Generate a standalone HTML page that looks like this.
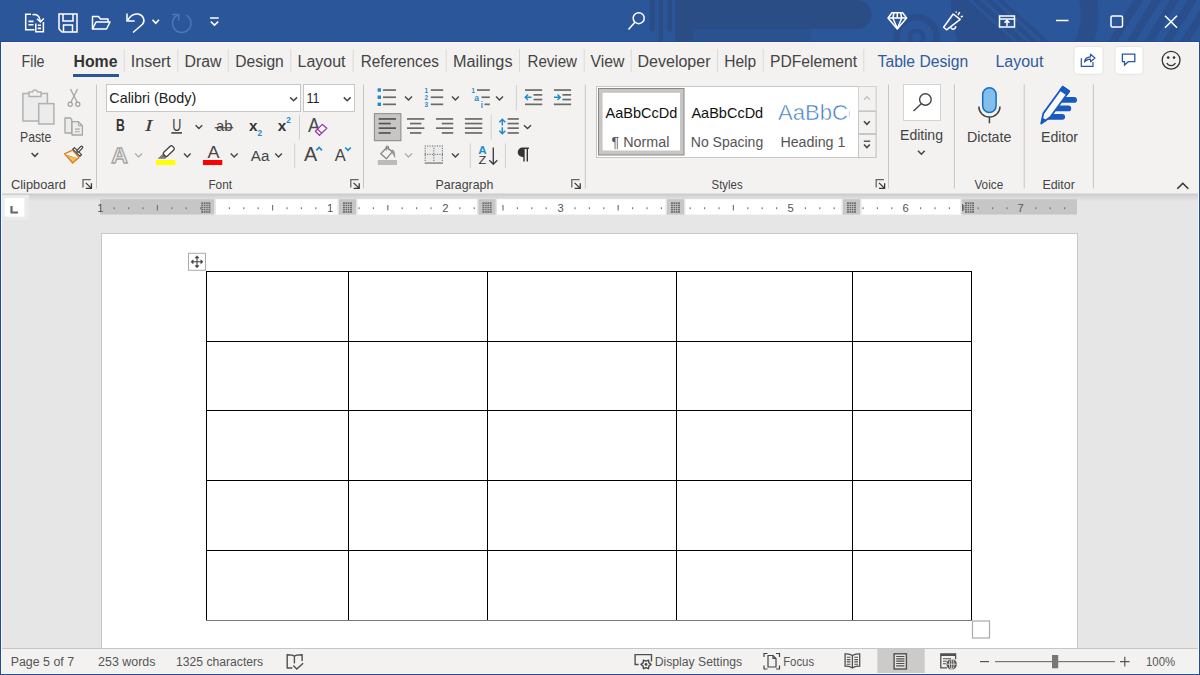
<!DOCTYPE html>
<html lang="en"><head><meta charset="utf-8"><title>Document - Word</title>
<style>
html,body{margin:0;padding:0;background:#e6e6e6;}
body{width:1200px;height:675px;overflow:hidden;font-family:"Liberation Sans", sans-serif;}
#app{position:relative;width:1200px;height:675px;overflow:hidden;background:#e6e6e6;}
#app>div{position:absolute;left:0;width:1200px;}
.ov{position:absolute;left:0;top:0;display:block;font-family:"Liberation Sans", sans-serif;}
#titlebar{top:0;height:42px;background:#2b579a;}
#tabs{top:42px;height:38px;background:#f3f2f1;}
#ribbon{top:80px;height:113px;background:#f3f2f1;}
#shadow{top:193px;height:9px;background:linear-gradient(to bottom,#e9e8e7 0px,#cfcecd 1.500px,#d9d9d9 4px,#e6e6e6 8.500px);}
#ruler{top:195px;height:27px;}
#docarea{top:222px;height:426px;}
#page{position:absolute;left:102px;top:12px;width:975px;height:414px;background:#fff;box-shadow:0 0 0 1px #c8c8c8;}
#status{top:648px;height:26px;background:#f3f2f1;box-shadow:inset 0 1px 0 #c6c6c6;}
#frame{top:41px;height:634px;box-sizing:border-box;border:1px solid #1f4c95;box-shadow:inset 0 0 0 1px #f9f8f6;pointer-events:none;}
</style></head><body>
<div id="app">
<div id="titlebar"><svg class="ov" width="1200" height="42" viewBox="0 0 1200 42"><g fill="#2a4d86"><path d="M675.300 0H857a14.500 14.500 0 0 1 0 29H675.300Z"/><rect x="649.800" y="0" width="5.100" height="31.500"/><rect x="658.400" y="0" width="4.700" height="42"/><rect x="667.400" y="0" width="4.500" height="31.500"/><rect x="675.300" y="0" width="17.700" height="42"/><rect x="676" y="28" width="135" height="14" opacity="0.45"/></g><g fill="none" stroke="#294e8b"><circle cx="916.600" cy="37.200" r="20.100" stroke-width="6.600"/><circle cx="916.600" cy="37.200" r="6.700" stroke-width="4.600"/><path d="M1085 -12A78 78 0 0 1 1080 52" stroke-width="18"/></g><g fill="#294e8b"><path d="M951 0h17l46.600 42h-56.600c-5-14-8-28-7-42Z"/><path d="M972 0h8l46.600 42h-8Z"/><path d="M985 0h7l46.600 42h-7Z"/><path d="M997 0h6l46.600 42h-6Z"/><path d="M1108 42h9l26-42h-9Z"/><path d="M1126 42h9l26-42h-9Z"/><path d="M1144 42h9l26-42h-9Z"/><path d="M1162 42h9l26-42h-9Z"/><path d="M1180 42h9l26-42h-9Z"/></g><g fill="none" stroke="#fff" stroke-width="1.5" stroke-width="1.4"><path d="M31 14.200H25.700V29.800H34.500"/><path d="M28.500 21.400h5M28.500 24.800h5" stroke-width="1.600"/><path d="M32.500 14.800c4-1.300 7.500 1.500 7.800 6.200"/><path d="M37 18.800l3.400 3.200 3.400-3.600"/><path d="M35.800 23.500V31.800H43.400V22"/><path d="M37.800 25.200h3.200M37.800 28.400h3.200" stroke-width="1.600"/></g><g fill="none" stroke="#fff" stroke-width="1.5"><path d="M59 14H77V32H62L59 29Z"/><path d="M63 14v7h10v-7"/><path d="M63.500 32v-7h9v7"/></g><g fill="none" stroke="#fff" stroke-width="1.5" stroke-linejoin="round"><path d="M92.500 29V16.500h6l2 2.500h7.500v3"/><path d="M92.500 29l3.500-7h14l-3.500 7Z"/></g><g fill="none" stroke="#fff" stroke-width="1.5"><path d="M127 13.500v7.600h7.700"/><path d="M127.500 20.600c2.500-4.500 6.500-7.200 10.500-6.500c5.500 1 7.500 6.500 4.500 10.200L133 32.500"/></g><path d="M152.5 19.8L155.75 23.3L159 19.8" fill="none" stroke="#fff" stroke-width="1.5999999999999999"/><g fill="none" stroke="#4d77b6" stroke-width="1.500"><path d="M172 14.400h6.700v6"/><path d="M178.200 14.800a9.200 9.200 0 1 0 7.800 0.300"/></g><g fill="none" stroke="#fff" stroke-width="1.5"><path d="M210 18h8.700"/><path d="M210.800 21.600l3.700 3.500 3.700-3.500"/></g><g fill="none" stroke="#fff" stroke-width="1.5"><circle cx="638.700" cy="18.200" r="5.500"/><path d="M634.900 22.300L628.500 29.400"/></g><g fill="none" stroke="#fff" stroke-width="1.5" stroke-width="1.300" stroke-linejoin="round"><path d="M892 12.800h10.600l4 5.200-9.300 11-9.300-11Z"/><path d="M888 18h18.600M894 12.800l-1.200 5.200 4.500 10.500 4.500-10.500-1.200-5.200M897.300 12.800V18"/></g><g fill="none" stroke="#fff" stroke-width="1.5" stroke-width="1.300" stroke-linejoin="round"><path d="M953.200 14l7 5.300-13.600 10.500-3-2.600Z"/><path d="M950.800 27.500a2.500 2.500 0 0 0 4.800-1.300"/><path d="M958 15.200l1.700-3.200M960.800 17.200l2-1.200M956 12.800l0.500-1.300"/></g><g fill="none" stroke="#fff" stroke-width="1.5" stroke-width="1.300"><rect x="999.500" y="16" width="15" height="11"/><path d="M999.500 19h15"/><path d="M1007 26v-5.500M1004.500 22.800l2.500-2.500 2.500 2.500"/></g><g fill="none" stroke="#fff" stroke-width="1.5" stroke-width="1.200"><path d="M1056 20.500h12.500"/><rect x="1111" y="16" width="11.500" height="11" rx="1.500"/><path d="M1165 15.800l12 12M1177 15.800l-12 12"/></g></svg></div>
<div id="tabs"><svg class="ov" width="1200" height="38" viewBox="0 42 1200 38"><text x="21.5" y="66.6" font-size="15.6" fill="#444" textLength="23.0" lengthAdjust="spacingAndGlyphs" >File</text><text x="130.8" y="66.6" font-size="15.6" fill="#444" textLength="40.0" lengthAdjust="spacingAndGlyphs" >Insert</text><text x="184.5" y="66.6" font-size="15.6" fill="#444" textLength="37.0" lengthAdjust="spacingAndGlyphs" >Draw</text><text x="235.2" y="66.6" font-size="15.6" fill="#444" textLength="48.6" lengthAdjust="spacingAndGlyphs" >Design</text><text x="297.5" y="66.6" font-size="15.6" fill="#444" textLength="48.0" lengthAdjust="spacingAndGlyphs" >Layout</text><text x="360.8" y="66.6" font-size="15.6" fill="#444" textLength="78.0" lengthAdjust="spacingAndGlyphs" >References</text><text x="453" y="66.6" font-size="15.6" fill="#444" textLength="59.5" lengthAdjust="spacingAndGlyphs" >Mailings</text><text x="527.5" y="66.6" font-size="15.6" fill="#444" textLength="49.5" lengthAdjust="spacingAndGlyphs" >Review</text><text x="590.5" y="66.6" font-size="15.6" fill="#444" textLength="34.0" lengthAdjust="spacingAndGlyphs" >View</text><text x="637.5" y="66.6" font-size="15.6" fill="#444" textLength="73.0" lengthAdjust="spacingAndGlyphs" >Developer</text><text x="724.2" y="66.6" font-size="15.6" fill="#444" textLength="32.0" lengthAdjust="spacingAndGlyphs" >Help</text><text x="770" y="66.6" font-size="15.6" fill="#444" textLength="87" lengthAdjust="spacingAndGlyphs" >PDFelement</text><text x="73.5" y="66.6" font-size="15.6" fill="#333" textLength="44" lengthAdjust="spacingAndGlyphs" font-weight="bold" >Home</text><rect x="73" y="74" width="46" height="3" fill="#2b579a"/><rect x="123.7" y="49" width="1" height="23.5" fill="#dcdad8"/><rect x="177.3" y="49" width="1" height="23.5" fill="#dcdad8"/><rect x="227.7" y="49" width="1" height="23.5" fill="#dcdad8"/><rect x="290.3" y="49" width="1" height="23.5" fill="#dcdad8"/><rect x="352.7" y="49" width="1" height="23.5" fill="#dcdad8"/><rect x="445.7" y="49" width="1" height="23.5" fill="#dcdad8"/><rect x="519.0" y="49" width="1" height="23.5" fill="#dcdad8"/><rect x="583.7" y="49" width="1" height="23.5" fill="#dcdad8"/><rect x="630.7" y="49" width="1" height="23.5" fill="#dcdad8"/><rect x="717.0" y="49" width="1" height="23.5" fill="#dcdad8"/><rect x="762.7" y="49" width="1" height="23.5" fill="#dcdad8"/><rect x="863.3" y="49" width="1" height="23.5" fill="#dcdad8"/><text x="877.6" y="66.6" font-size="15.6" fill="#2f5ba0" textLength="90.6" lengthAdjust="spacingAndGlyphs" >Table Design</text><text x="995.4" y="66.6" font-size="15.6" fill="#2f5ba0" textLength="48" lengthAdjust="spacingAndGlyphs" >Layout</text><rect x="1074" y="46.500" width="29" height="27.800" rx="3" fill="#fff" stroke="#e6e4e2"/><rect x="1115" y="46.500" width="28" height="27.800" rx="3" fill="#fff" stroke="#e6e4e2"/><g fill="none" stroke="#2b579a" stroke-width="1.200" stroke-linejoin="round"><path d="M1081.300 58.200v8.200h11.700v-4.400"/><path d="M1084.500 62c0.300-3 2.500-5 6-5.200v-2.600l4.500 3.800-4.500 3.800v-2.600c-2.500 0-4.500 0.800-6 2.800Z" fill="#fff"/></g><path d="M1122.400 54.200h12.400v7.500h-6.500l-3.800 3.400v-3.400h-2.100Z" fill="none" stroke="#2b579a" stroke-width="1.300"/><g fill="none" stroke="#333" stroke-width="1.300"><circle cx="1171.100" cy="60.200" r="8.900"/><path d="M1166.800 63a4.800 4.800 0 0 0 8.600 0"/></g><circle cx="1168.200" cy="57.600" r="1.300" fill="#333"/><circle cx="1174" cy="57.600" r="1.300" fill="#333"/></svg></div>
<div id="ribbon"><svg class="ov" width="1200" height="113" viewBox="0 80 1200 113"><rect x="96.0" y="84.5" width="1" height="104.0" fill="#c8c6c4"/><rect x="363.0" y="84.5" width="1" height="104.0" fill="#c8c6c4"/><rect x="584.8" y="84.5" width="1" height="104.0" fill="#c8c6c4"/><rect x="888.0" y="84.5" width="1" height="104.0" fill="#c8c6c4"/><rect x="953.9" y="84.5" width="1" height="104.0" fill="#c8c6c4"/><rect x="1023.7" y="84.5" width="1" height="104.0" fill="#c8c6c4"/><rect x="1092.9" y="84.5" width="1" height="104.0" fill="#c8c6c4"/><g stroke="#b1b1b1" stroke-width="1.500" fill="#ececec"><path d="M22.900 93.500h24.500v27.600h-24.500Z"/><path d="M29 93.500v-1.500h3.500a2.600 2.600 0 0 1 5 0h3.500v4.500h-12Z" fill="#f3f2f1"/><rect x="38.700" y="103.600" width="15.200" height="20.400" fill="#ececec"/></g><text x="20" y="141.7" font-size="14.3" fill="#444" textLength="31.3" lengthAdjust="spacingAndGlyphs" >Paste</text><path d="M31.6 152.9L34.900000000000006 156.3L38.2 152.9" fill="none" stroke="#444" stroke-width="1.5"/><g fill="none" stroke="#a0a0a0" stroke-width="1.200"><path d="M70.500 89l6.500 13M77.500 89l-6.500 13"/><circle cx="70.200" cy="104.200" r="2.100"/><circle cx="77.800" cy="104.200" r="2.100"/></g><g fill="#ececec" stroke="#a6a6a6" stroke-width="1.300" stroke-linejoin="round"><path d="M65 118h5.300l1.500 1.500v13.500h-6.800Z"/><path d="M72 121.700h6.400l4 4v9.300h-10.400Z"/><path d="M78.400 121.700v4h4" fill="none" stroke-width="1"/><path d="M75 129.100h4.800M75 131.800h4.800" fill="none" stroke-width="1.100"/></g><g stroke-linejoin="round"><path d="M64.600 153.800l8-3.600 6.500 7.400-6.400 5.400Z" fill="#fff" stroke="#e07a1f" stroke-width="1.300"/><path d="M67 155.300l9.800 3-4.100 3.500Z" fill="#f8c566" stroke="#e58a2e" stroke-width="0.800"/><path d="M72.700 149.100l7.100 7.100 1.700-1.500-7.100-7.100Z" fill="#fff" stroke="#444" stroke-width="1.200"/><path d="M78 151l3.600-3.700" stroke="#444" stroke-width="3.400" stroke-linecap="round" fill="none"/><path d="M78.300 150.700l3.200-3.300" stroke="#fff" stroke-width="1.100" stroke-linecap="round" fill="none"/></g><text x="11" y="188.7" font-size="12.9" fill="#444" textLength="54.8" lengthAdjust="spacingAndGlyphs" >Clipboard</text><g fill="none" stroke-width="1.300"><path d="M83.0 187.6V179.7H90.8" stroke="#666"/><path d="M85.8 182.9L91.2 188.1M91.4 183.2V188.3H85.8" stroke="#383838"/></g><rect x="106.500" y="84.500" width="194" height="27" fill="#fff" stroke="#c8c6c4"/><rect x="303.500" y="84.500" width="51" height="27" fill="#fff" stroke="#c8c6c4"/><text x="109.3" y="103.2" font-size="14.4" fill="#222" textLength="87" lengthAdjust="spacingAndGlyphs" >Calibri (Body)</text><path d="M290.2 97.4L293.6 100.8L297 97.4" fill="none" stroke="#444" stroke-width="1.5"/><text x="306.6" y="103.2" font-size="14.4" fill="#222" textLength="13" lengthAdjust="spacingAndGlyphs" >11</text><path d="M343.8 97.4L347.20000000000005 100.8L350.6 97.4" fill="none" stroke="#444" stroke-width="1.5"/><text x="115.9" y="130.75" font-size="15.9" fill="#333" textLength="8.8" lengthAdjust="spacingAndGlyphs" font-weight="bold" >B</text><text x="144.7" y="130.75" font-size="16.5" fill="#3a3a3a" textLength="7.9" lengthAdjust="spacingAndGlyphs" font-family='"Liberation Serif", serif' font-style="italic" >I</text><text x="172.2" y="131" font-size="15.8" fill="#3a3a3a" textLength="9.1" lengthAdjust="spacingAndGlyphs" >U</text><rect x="171.300" y="132.100" width="10.700" height="1.600" fill="#444"/><path d="M195.6 125.2L198.89999999999998 128.6L202.2 125.2" fill="none" stroke="#444" stroke-width="1.4"/><text x="216" y="131.3" font-size="14" fill="#444" textLength="16.5" lengthAdjust="spacingAndGlyphs" >ab</text><rect x="214.700" y="127.200" width="18.600" height="1.100" fill="#444"/><text x="249" y="131" font-size="14.5" fill="#333" textLength="8.5" lengthAdjust="spacingAndGlyphs" font-weight="bold" >x</text><text x="257.6" y="135.9" font-size="8.2" fill="#1e8bcd" textLength="4.6" lengthAdjust="spacingAndGlyphs" font-weight="bold" >2</text><text x="277.8" y="131" font-size="14.5" fill="#333" textLength="8.5" lengthAdjust="spacingAndGlyphs" font-weight="bold" >x</text><text x="286.2" y="122.9" font-size="8.2" fill="#1e8bcd" textLength="4.6" lengthAdjust="spacingAndGlyphs" font-weight="bold" >2</text><rect x="299.0" y="114.5" width="1" height="25.0" fill="#d2d0ce"/><text x="308" y="131.8" font-size="20" fill="#4a4a4a" textLength="12" lengthAdjust="spacingAndGlyphs" >A</text><path d="M315.400 131.300l6.900-6.900 4.500 3.900-7.400 6.900Z M317.600 129.300l4 3.800" fill="#fff" stroke="#a035b8" stroke-width="1.300" stroke-linejoin="round"/><text x="111.3" y="163" font-size="22.5" fill="#f0f0f0" textLength="16.6" lengthAdjust="spacingAndGlyphs" font-weight="bold" stroke="#a4a4a4" stroke-width="1.300">A</text><path d="M135.2 153.6L138.6 157L142 153.6" fill="none" stroke="#b0b0b0" stroke-width="1.4"/><path d="M163.200 153.400l3.600 3.400-1.400 2h-7.800Z" fill="#7a7a7a"/><rect x="162.800" y="148.500" width="12" height="5.200" rx="1.600" fill="#fff" stroke="#404040" stroke-width="1.300" transform="rotate(-44 168.800 151.100)"/><rect x="156" y="160" width="19.400" height="5" fill="#ffff00"/><path d="M184 153.6L187.3 157L190.6 153.6" fill="none" stroke="#444" stroke-width="1.4"/><text x="207.6" y="158.4" font-size="16.8" fill="#444" textLength="12" lengthAdjust="spacingAndGlyphs" >A</text><rect x="203" y="160" width="19.300" height="5" fill="#ff0000"/><path d="M230.7 153.6L234.2 157L237.7 153.6" fill="none" stroke="#444" stroke-width="1.4"/><text x="250.8" y="160.7" font-size="15.5" fill="#444" textLength="18.6" lengthAdjust="spacingAndGlyphs" >Aa</text><path d="M275.2 153.6L278.54999999999995 157L281.9 153.6" fill="none" stroke="#444" stroke-width="1.4"/><rect x="294.2" y="143.5" width="1" height="24.80000000000001" fill="#d2d0ce"/><text x="304" y="160.7" font-size="20" fill="#444" textLength="13.2" lengthAdjust="spacingAndGlyphs" >A</text><path d="M316.3 150.3L319.15 147.5L322 150.3" fill="none" stroke="#1e8bcd" stroke-width="1.7"/><text x="334.7" y="160.7" font-size="16.3" fill="#444" textLength="11" lengthAdjust="spacingAndGlyphs" >A</text><path d="M345.2 147.5L348.0 150.3L350.8 147.5" fill="none" stroke="#1e8bcd" stroke-width="1.7"/><text x="208.4" y="188.7" font-size="12.9" fill="#444" textLength="23.6" lengthAdjust="spacingAndGlyphs" >Font</text><g fill="none" stroke-width="1.300"><path d="M350.8 187.6V179.7H358.6" stroke="#666"/><path d="M353.6 182.9L359.0 188.1M359.2 183.2V188.3H353.6" stroke="#383838"/></g><rect x="377.600" y="88.3" width="3.400" height="3.400" fill="#1e8bcd"/><rect x="377.600" y="95.5" width="3.400" height="3.400" fill="#1e8bcd"/><rect x="377.600" y="102.6" width="3.400" height="3.400" fill="#1e8bcd"/><rect x="383.0" y="89.2" width="13" height="1.7" fill="#6a6a6a"/><rect x="383.0" y="96.4" width="13" height="1.7" fill="#6a6a6a"/><rect x="383.0" y="103.5" width="13" height="1.7" fill="#6a6a6a"/><path d="M405 96.4L408.5 99.9L412 96.4" fill="none" stroke="#444" stroke-width="1.4"/><text x="424.6" y="93" font-size="7.6" fill="#1e8bcd" textLength="3.6" lengthAdjust="spacingAndGlyphs" font-weight="bold" >1</text><text x="424.6" y="100.2" font-size="7.6" fill="#1e8bcd" textLength="3.6" lengthAdjust="spacingAndGlyphs" font-weight="bold" >2</text><text x="424.6" y="107.4" font-size="7.6" fill="#1e8bcd" textLength="3.6" lengthAdjust="spacingAndGlyphs" font-weight="bold" >3</text><rect x="430.8" y="89.2" width="12.4" height="1.7" fill="#6a6a6a"/><rect x="430.8" y="96.4" width="12.4" height="1.7" fill="#6a6a6a"/><rect x="430.8" y="103.5" width="12.4" height="1.7" fill="#6a6a6a"/><path d="M452 96.4L455.4 99.9L458.8 96.4" fill="none" stroke="#444" stroke-width="1.4"/><text x="471.4" y="93" font-size="7.4" fill="#1e8bcd" textLength="3.4" lengthAdjust="spacingAndGlyphs" font-weight="bold" >1</text><text x="474.3" y="100.7" font-size="8.5" fill="#1e8bcd" textLength="4.8" lengthAdjust="spacingAndGlyphs" font-weight="bold" >a</text><text x="480.8" y="107.6" font-size="8.2" fill="#1e8bcd" textLength="2.2" lengthAdjust="spacingAndGlyphs" font-weight="bold" >i</text><rect x="477.0" y="89.2" width="12.8" height="1.7" fill="#6a6a6a"/><rect x="481.5" y="96.4" width="8.3" height="1.7" fill="#6a6a6a"/><rect x="484.5" y="103.5" width="5.3" height="1.7" fill="#6a6a6a"/><path d="M496 96.4L499.5 99.9L503 96.4" fill="none" stroke="#444" stroke-width="1.4"/><rect x="515.9" y="85" width="1" height="25.400000000000006" fill="#d2d0ce"/><rect x="525.0" y="89.2" width="17.2" height="1.7" fill="#6a6a6a"/><rect x="525.0" y="103.5" width="17.2" height="1.7" fill="#6a6a6a"/><rect x="533.5" y="94.0" width="8.7" height="1.7" fill="#6a6a6a"/><rect x="533.5" y="98.7" width="8.7" height="1.7" fill="#6a6a6a"/><path d="M531.500 97.200h-6M528 94.500l-2.800 2.700 2.800 2.700" fill="none" stroke="#1e8bcd" stroke-width="1.400"/><rect x="553.9" y="89.2" width="17.2" height="1.7" fill="#6a6a6a"/><rect x="553.9" y="103.5" width="17.2" height="1.7" fill="#6a6a6a"/><rect x="562.4" y="94.0" width="8.7" height="1.7" fill="#6a6a6a"/><rect x="562.4" y="98.7" width="8.7" height="1.7" fill="#6a6a6a"/><path d="M554 97.200h6M557.500 94.500l2.800 2.700-2.800 2.700" fill="none" stroke="#1e8bcd" stroke-width="1.400"/><rect x="374.400" y="113.700" width="26.500" height="27" fill="#c8c6c4" stroke="#8a8886" stroke-width="1"/><rect x="378.7" y="118.1" width="17.3" height="1.7" fill="#555"/><rect x="378.7" y="122.7" width="12" height="1.7" fill="#555"/><rect x="378.7" y="127.3" width="17.3" height="1.7" fill="#555"/><rect x="378.7" y="132.1" width="12" height="1.7" fill="#555"/><rect x="407.0" y="118.1" width="17.4" height="1.7" fill="#6a6a6a"/><rect x="410.0" y="122.7" width="11.4" height="1.7" fill="#6a6a6a"/><rect x="407.0" y="127.3" width="17.4" height="1.7" fill="#6a6a6a"/><rect x="410.0" y="132.1" width="11.4" height="1.7" fill="#6a6a6a"/><rect x="436.0" y="118.1" width="17.2" height="1.7" fill="#6a6a6a"/><rect x="441.8" y="122.7" width="11.4" height="1.7" fill="#6a6a6a"/><rect x="436.0" y="127.3" width="17.2" height="1.7" fill="#6a6a6a"/><rect x="441.8" y="132.1" width="11.4" height="1.7" fill="#6a6a6a"/><rect x="464.9" y="118.1" width="17.4" height="1.7" fill="#6a6a6a"/><rect x="464.9" y="122.7" width="17.4" height="1.7" fill="#6a6a6a"/><rect x="464.9" y="127.3" width="17.4" height="1.7" fill="#6a6a6a"/><rect x="464.9" y="132.1" width="17.4" height="1.7" fill="#6a6a6a"/><rect x="490.7" y="114.5" width="1" height="25.0" fill="#d2d0ce"/><path d="M502.300 119.200v6.300M502.300 127.300v6.500M499.300 122.200l3-3 3 3M499.300 130.800l3 3 3-3" fill="none" stroke="#1e8bcd" stroke-width="1.500"/><rect x="507.6" y="118.1" width="11.2" height="1.7" fill="#6a6a6a"/><rect x="507.6" y="122.7" width="11.2" height="1.7" fill="#6a6a6a"/><rect x="507.6" y="127.3" width="11.2" height="1.7" fill="#6a6a6a"/><rect x="507.6" y="132.1" width="11.2" height="1.7" fill="#6a6a6a"/><path d="M524 125.2L527.5 128.6L531 125.2" fill="none" stroke="#444" stroke-width="1.4"/><path d="M386.600 147.600l5.800 4-6 7.200-5.600-5Z" fill="#f3f2f1" stroke="#868686" stroke-width="1.300" stroke-linejoin="round"/><path d="M386.200 150.500v-3.300c0-1.600 2.300-1.600 2.300 0v2" fill="none" stroke="#868686" stroke-width="1.200"/><path d="M391.400 150.300c2.200-0.800 3.300 1 3.300 6.900c-1-2.500-1.600-3.800-3-4.700Z" fill="#9a9a9a" stroke="#8a8a8a" stroke-width="0.800"/><rect x="377.800" y="160" width="19.200" height="5" fill="#bdbbb9"/><path d="M405 153.6L408.5 157L412 153.6" fill="none" stroke="#b0b0b0" stroke-width="1.4"/><rect x="424.600" y="145.400" width="18.400" height="17" fill="#ebebeb"/><g fill="#6e6e6e"><rect x="424.65" y="145.45" width="1.100" height="1.100"/><rect x="424.65" y="153.85" width="1.100" height="1.100"/><rect x="427.11" y="145.45" width="1.100" height="1.100"/><rect x="427.11" y="153.85" width="1.100" height="1.100"/><rect x="429.56" y="145.45" width="1.100" height="1.100"/><rect x="429.56" y="153.85" width="1.100" height="1.100"/><rect x="432.02" y="145.45" width="1.100" height="1.100"/><rect x="432.02" y="153.85" width="1.100" height="1.100"/><rect x="434.48" y="145.45" width="1.100" height="1.100"/><rect x="434.48" y="153.85" width="1.100" height="1.100"/><rect x="436.94" y="145.45" width="1.100" height="1.100"/><rect x="436.94" y="153.85" width="1.100" height="1.100"/><rect x="439.39" y="145.45" width="1.100" height="1.100"/><rect x="439.39" y="153.85" width="1.100" height="1.100"/><rect x="441.85" y="145.45" width="1.100" height="1.100"/><rect x="441.85" y="153.85" width="1.100" height="1.100"/><rect x="424.65" y="147.85" width="1.100" height="1.100"/><rect x="433.25" y="147.85" width="1.100" height="1.100"/><rect x="441.85" y="147.85" width="1.100" height="1.100"/><rect x="424.65" y="150.25" width="1.100" height="1.100"/><rect x="433.25" y="150.25" width="1.100" height="1.100"/><rect x="441.85" y="150.25" width="1.100" height="1.100"/><rect x="424.65" y="152.65" width="1.100" height="1.100"/><rect x="433.25" y="152.65" width="1.100" height="1.100"/><rect x="441.85" y="152.65" width="1.100" height="1.100"/><rect x="424.65" y="155.05" width="1.100" height="1.100"/><rect x="433.25" y="155.05" width="1.100" height="1.100"/><rect x="441.85" y="155.05" width="1.100" height="1.100"/><rect x="424.65" y="157.45" width="1.100" height="1.100"/><rect x="433.25" y="157.45" width="1.100" height="1.100"/><rect x="441.85" y="157.45" width="1.100" height="1.100"/><rect x="424.65" y="159.85" width="1.100" height="1.100"/><rect x="433.25" y="159.85" width="1.100" height="1.100"/><rect x="441.85" y="159.85" width="1.100" height="1.100"/></g><rect x="424.600" y="162.200" width="18.400" height="1.800" fill="#999"/><path d="M452 153.6L455.4 157L458.8 153.6" fill="none" stroke="#444" stroke-width="1.4"/><rect x="469.7" y="143.5" width="1" height="24.80000000000001" fill="#d2d0ce"/><text x="478.2" y="154" font-size="10.6" fill="#1e8bcd" textLength="8.4" lengthAdjust="spacingAndGlyphs" font-weight="bold" >A</text><text x="478.4" y="164.2" font-size="11.2" fill="#333" textLength="7.8" lengthAdjust="spacingAndGlyphs" >Z</text><path d="M493.300 147.500v16.500M489.300 160.300l4 4 4-4" fill="none" stroke="#444" stroke-width="1.400"/><rect x="504.9" y="143.5" width="1" height="24.80000000000001" fill="#d2d0ce"/><path d="M524 148.300v13.300M527.300 148.300v13.300M528.900 148.300h-6.500a4 4 0 0 0 0 8h1.500" fill="none" stroke="#333" stroke-width="1.400"/><path d="M524 148.500h-1.600a3.800 3.800 0 0 0 0 7.600h1.600Z" fill="#333"/><text x="435.6" y="188.7" font-size="12.9" fill="#444" textLength="57.7" lengthAdjust="spacingAndGlyphs" >Paragraph</text><g fill="none" stroke-width="1.300"><path d="M571.8 187.6V179.7H579.6" stroke="#666"/><path d="M574.6 182.9L580.0 188.1M580.2 183.2V188.3H574.6" stroke="#383838"/></g><rect x="596.500" y="86.500" width="279.500" height="71" fill="#fff" stroke="#c8c6c4"/><rect x="598.500" y="88.500" width="85.500" height="66.500" fill="#c8c6c4" stroke="#8a8886"/><rect x="602.600" y="92.800" width="77.400" height="57.700" fill="#fff"/><text x="605.6" y="117.8" font-size="14.8" fill="#111" textLength="71.8" lengthAdjust="spacingAndGlyphs" >AaBbCcDd</text><text x="611.6" y="146.5" font-size="14" fill="#555" textLength="57.8" lengthAdjust="spacingAndGlyphs" >¶ Normal</text><text x="691.4" y="117.8" font-size="14.8" fill="#111" textLength="71.8" lengthAdjust="spacingAndGlyphs" >AaBbCcDd</text><text x="690.8" y="146.5" font-size="14" fill="#555" textLength="72.4" lengthAdjust="spacingAndGlyphs" >No Spacing</text><svg x="776" y="88" width="73.400" height="40" viewBox="776 88 73.400 40" overflow="hidden"><text x="778" y="120" font-size="21.6" fill="#3b78c2" textLength="81" lengthAdjust="spacingAndGlyphs" stroke="#fff" stroke-width="0.550">AaBbCc</text></svg><text x="780.4" y="146.5" font-size="14" fill="#555" textLength="65" lengthAdjust="spacingAndGlyphs" >Heading 1</text><rect x="858.500" y="86.500" width="17.500" height="24" fill="#f3f2f1" stroke="#d6d4d2"/><rect x="858.500" y="111.500" width="17.500" height="22" fill="#f3f2f1" stroke="#c8c6c4"/><rect x="858.500" y="134.500" width="17.500" height="23" fill="#f3f2f1" stroke="#c8c6c4"/><path d="M864 99.8L867.0 96.8L870 99.8" fill="none" stroke="#c0c0c0" stroke-width="1.4"/><path d="M864 121.2L866.9 124.3L869.8 121.2" fill="none" stroke="#444" stroke-width="1.5"/><path d="M863.800 141.200h6.400" stroke="#444" stroke-width="1.300"/><path d="M864 144.5L866.9 147.6L869.8 144.5" fill="none" stroke="#444" stroke-width="1.5"/><text x="711.6" y="188.7" font-size="12.9" fill="#444" textLength="31" lengthAdjust="spacingAndGlyphs" >Styles</text><g fill="none" stroke-width="1.300"><path d="M876.2 187.6V179.7H884.0" stroke="#666"/><path d="M879.0 182.9L884.4 188.1M884.6 183.2V188.3H879.0" stroke="#383838"/></g><rect x="903.500" y="84.500" width="37" height="36" fill="#fff" stroke="#d6d4d2"/><g fill="none" stroke="#444" stroke-width="1.400"><circle cx="925.400" cy="99.500" r="5.800"/><path d="M921.300 103.800L913.500 111"/></g><text x="900" y="139.9" font-size="14.3" fill="#444" textLength="43" lengthAdjust="spacingAndGlyphs" >Editing</text><path d="M918 150.7L921.35 154.2L924.7 150.7" fill="none" stroke="#444" stroke-width="1.5"/><rect x="982.700" y="87.700" width="13.400" height="24.800" rx="6.700" fill="#83beec" stroke="#1470c0" stroke-width="1.500"/><path d="M978.800 106.500a10.600 10.600 0 0 0 21.200 0M989.400 117.200v6" fill="none" stroke="#444" stroke-width="1.500"/><text x="967" y="141.5" font-size="14.3" fill="#444" textLength="44.5" lengthAdjust="spacingAndGlyphs" >Dictate</text><text x="974.4" y="188.7" font-size="12.9" fill="#444" textLength="28.8" lengthAdjust="spacingAndGlyphs" >Voice</text><g stroke="#185abd" stroke-linecap="round" stroke-width="5.800"><path d="M1060 99.900h14.100M1054 108.400h14.300M1048 116.800h14.200"/></g><path d="M1062.700 86.800l6.500 4.400-18.800 25.800-9.200 6.600 2.100-10.200Z" fill="#fafafa" stroke="#185abd" stroke-width="1.800" stroke-linejoin="round"/><path d="M1062.700 86.800l6.500 4.400-2.400 3.300-6.500-4.400Z" fill="#185abd" stroke="#185abd" stroke-width="1.800" stroke-linejoin="round"/><path d="M1041.200 123.600l1.300-5.500 3.600 2.500Z" fill="#185abd" stroke="#185abd" stroke-linejoin="round"/><text x="1041" y="141.5" font-size="14.3" fill="#444" textLength="37" lengthAdjust="spacingAndGlyphs" >Editor</text><text x="1042.4" y="188.7" font-size="12.9" fill="#444" textLength="32.5" lengthAdjust="spacingAndGlyphs" >Editor</text><path d="M1177.3 188.8L1182.8 183.3L1188.3 188.8" fill="none" stroke="#333" stroke-width="1.5999999999999999"/></svg></div>
<div id="shadow"></div>
<div id="ruler"><svg class="ov" width="1200" height="27" viewBox="0 195 1200 27"><rect x="1.500" y="195" width="27.500" height="25" fill="#ebebeb"/><rect x="4.500" y="198" width="20" height="18.600" fill="#fff"/><path d="M11.500 206v6.500h6.500" fill="none" stroke="#666" stroke-width="2.200"/><rect x="100" y="199.2" width="977" height="15.400000000000006" fill="#fff"/><rect x="100" y="199.2" width="116" height="15.400000000000006" fill="#e6e6e6"/><rect x="100" y="199.2" width="114.200" height="15.400000000000006" fill="#c6c6c6"/><rect x="960.300" y="199.2" width="116.700" height="15.400000000000006" fill="#e6e6e6"/><rect x="961.800" y="199.2" width="115.200" height="15.400000000000006" fill="#c6c6c6"/><rect x="113.6" y="207.300" width="1.200" height="1.800" fill="#777"/><rect x="128.0" y="207.300" width="1.200" height="1.800" fill="#777"/><rect x="142.4" y="207.300" width="1.200" height="1.800" fill="#777"/><rect x="156.8" y="205" width="1.200" height="5.500" fill="#777"/><rect x="171.2" y="207.300" width="1.200" height="1.800" fill="#777"/><rect x="185.6" y="207.300" width="1.200" height="1.800" fill="#777"/><rect x="200.0" y="207.300" width="1.200" height="1.800" fill="#777"/><rect x="228.8" y="207.300" width="1.200" height="1.800" fill="#777"/><rect x="243.2" y="207.300" width="1.200" height="1.800" fill="#777"/><rect x="257.6" y="207.300" width="1.200" height="1.800" fill="#777"/><rect x="272.0" y="205" width="1.200" height="5.500" fill="#777"/><rect x="286.4" y="207.300" width="1.200" height="1.800" fill="#777"/><rect x="300.8" y="207.300" width="1.200" height="1.800" fill="#777"/><rect x="315.2" y="207.300" width="1.200" height="1.800" fill="#777"/><rect x="344.0" y="207.300" width="1.200" height="1.800" fill="#777"/><rect x="358.4" y="207.300" width="1.200" height="1.800" fill="#777"/><rect x="372.8" y="207.300" width="1.200" height="1.800" fill="#777"/><rect x="387.2" y="205" width="1.200" height="5.500" fill="#777"/><rect x="401.6" y="207.300" width="1.200" height="1.800" fill="#777"/><rect x="416.0" y="207.300" width="1.200" height="1.800" fill="#777"/><rect x="430.4" y="207.300" width="1.200" height="1.800" fill="#777"/><rect x="459.2" y="207.300" width="1.200" height="1.800" fill="#777"/><rect x="473.6" y="207.300" width="1.200" height="1.800" fill="#777"/><rect x="488.0" y="207.300" width="1.200" height="1.800" fill="#777"/><rect x="502.4" y="205" width="1.200" height="5.500" fill="#777"/><rect x="516.8" y="207.300" width="1.200" height="1.800" fill="#777"/><rect x="531.2" y="207.300" width="1.200" height="1.800" fill="#777"/><rect x="545.6" y="207.300" width="1.200" height="1.800" fill="#777"/><rect x="574.4" y="207.300" width="1.200" height="1.800" fill="#777"/><rect x="588.8" y="207.300" width="1.200" height="1.800" fill="#777"/><rect x="603.2" y="207.300" width="1.200" height="1.800" fill="#777"/><rect x="617.6" y="205" width="1.200" height="5.500" fill="#777"/><rect x="632.0" y="207.300" width="1.200" height="1.800" fill="#777"/><rect x="646.4" y="207.300" width="1.200" height="1.800" fill="#777"/><rect x="660.8" y="207.300" width="1.200" height="1.800" fill="#777"/><rect x="689.6" y="207.300" width="1.200" height="1.800" fill="#777"/><rect x="704.0" y="207.300" width="1.200" height="1.800" fill="#777"/><rect x="718.4" y="207.300" width="1.200" height="1.800" fill="#777"/><rect x="732.8" y="205" width="1.200" height="5.500" fill="#777"/><rect x="747.2" y="207.300" width="1.200" height="1.800" fill="#777"/><rect x="761.6" y="207.300" width="1.200" height="1.800" fill="#777"/><rect x="776.0" y="207.300" width="1.200" height="1.800" fill="#777"/><rect x="804.8" y="207.300" width="1.200" height="1.800" fill="#777"/><rect x="819.2" y="207.300" width="1.200" height="1.800" fill="#777"/><rect x="833.6" y="207.300" width="1.200" height="1.800" fill="#777"/><rect x="848.0" y="205" width="1.200" height="5.500" fill="#777"/><rect x="862.4" y="207.300" width="1.200" height="1.800" fill="#777"/><rect x="876.8" y="207.300" width="1.200" height="1.800" fill="#777"/><rect x="891.2" y="207.300" width="1.200" height="1.800" fill="#777"/><rect x="920.0" y="207.300" width="1.200" height="1.800" fill="#777"/><rect x="934.4" y="207.300" width="1.200" height="1.800" fill="#777"/><rect x="948.8" y="207.300" width="1.200" height="1.800" fill="#777"/><rect x="963.2" y="205" width="1.200" height="5.500" fill="#777"/><rect x="977.6" y="207.300" width="1.200" height="1.800" fill="#777"/><rect x="992.0" y="207.300" width="1.200" height="1.800" fill="#777"/><rect x="1006.4" y="207.300" width="1.200" height="1.800" fill="#777"/><rect x="1035.2" y="207.300" width="1.200" height="1.800" fill="#777"/><rect x="1049.6" y="207.300" width="1.200" height="1.800" fill="#777"/><rect x="1064.0" y="207.300" width="1.200" height="1.800" fill="#777"/><rect x="201.3" y="202.400" width="9" height="10.400" fill="#6b6b6b"/><rect x="203.20" y="202.400" width="0.700" height="10.400" fill="#c6c6c6"/><rect x="205.45" y="202.400" width="0.700" height="10.400" fill="#c6c6c6"/><rect x="207.70" y="202.400" width="0.700" height="10.400" fill="#c6c6c6"/><rect x="201.3" y="204.13" width="9" height="0.700" fill="#c6c6c6"/><rect x="201.3" y="206.21" width="9" height="0.700" fill="#c6c6c6"/><rect x="201.3" y="208.29" width="9" height="0.700" fill="#c6c6c6"/><rect x="201.3" y="210.37" width="9" height="0.700" fill="#c6c6c6"/><rect x="337.4" y="199.2" width="20.200" height="15.400000000000006" fill="#e6e6e6"/><rect x="339.0" y="199.2" width="17" height="15.400000000000006" fill="#c6c6c6"/><rect x="343.0" y="202.400" width="9" height="10.400" fill="#6b6b6b"/><rect x="344.90" y="202.400" width="0.700" height="10.400" fill="#c6c6c6"/><rect x="347.15" y="202.400" width="0.700" height="10.400" fill="#c6c6c6"/><rect x="349.40" y="202.400" width="0.700" height="10.400" fill="#c6c6c6"/><rect x="343.0" y="204.13" width="9" height="0.700" fill="#c6c6c6"/><rect x="343.0" y="206.21" width="9" height="0.700" fill="#c6c6c6"/><rect x="343.0" y="208.29" width="9" height="0.700" fill="#c6c6c6"/><rect x="343.0" y="210.37" width="9" height="0.700" fill="#c6c6c6"/><rect x="476.9" y="199.2" width="20.200" height="15.400000000000006" fill="#e6e6e6"/><rect x="478.5" y="199.2" width="17" height="15.400000000000006" fill="#c6c6c6"/><rect x="482.5" y="202.400" width="9" height="10.400" fill="#6b6b6b"/><rect x="484.40" y="202.400" width="0.700" height="10.400" fill="#c6c6c6"/><rect x="486.65" y="202.400" width="0.700" height="10.400" fill="#c6c6c6"/><rect x="488.90" y="202.400" width="0.700" height="10.400" fill="#c6c6c6"/><rect x="482.5" y="204.13" width="9" height="0.700" fill="#c6c6c6"/><rect x="482.5" y="206.21" width="9" height="0.700" fill="#c6c6c6"/><rect x="482.5" y="208.29" width="9" height="0.700" fill="#c6c6c6"/><rect x="482.5" y="210.37" width="9" height="0.700" fill="#c6c6c6"/><rect x="665.4" y="199.2" width="20.200" height="15.400000000000006" fill="#e6e6e6"/><rect x="667.0" y="199.2" width="17" height="15.400000000000006" fill="#c6c6c6"/><rect x="671.0" y="202.400" width="9" height="10.400" fill="#6b6b6b"/><rect x="672.90" y="202.400" width="0.700" height="10.400" fill="#c6c6c6"/><rect x="675.15" y="202.400" width="0.700" height="10.400" fill="#c6c6c6"/><rect x="677.40" y="202.400" width="0.700" height="10.400" fill="#c6c6c6"/><rect x="671.0" y="204.13" width="9" height="0.700" fill="#c6c6c6"/><rect x="671.0" y="206.21" width="9" height="0.700" fill="#c6c6c6"/><rect x="671.0" y="208.29" width="9" height="0.700" fill="#c6c6c6"/><rect x="671.0" y="210.37" width="9" height="0.700" fill="#c6c6c6"/><rect x="841.4" y="199.2" width="20.200" height="15.400000000000006" fill="#e6e6e6"/><rect x="843.0" y="199.2" width="17" height="15.400000000000006" fill="#c6c6c6"/><rect x="847.0" y="202.400" width="9" height="10.400" fill="#6b6b6b"/><rect x="848.90" y="202.400" width="0.700" height="10.400" fill="#c6c6c6"/><rect x="851.15" y="202.400" width="0.700" height="10.400" fill="#c6c6c6"/><rect x="853.40" y="202.400" width="0.700" height="10.400" fill="#c6c6c6"/><rect x="847.0" y="204.13" width="9" height="0.700" fill="#c6c6c6"/><rect x="847.0" y="206.21" width="9" height="0.700" fill="#c6c6c6"/><rect x="847.0" y="208.29" width="9" height="0.700" fill="#c6c6c6"/><rect x="847.0" y="210.37" width="9" height="0.700" fill="#c6c6c6"/><rect x="965.0" y="202.400" width="9" height="10.400" fill="#6b6b6b"/><rect x="966.90" y="202.400" width="0.700" height="10.400" fill="#c6c6c6"/><rect x="969.15" y="202.400" width="0.700" height="10.400" fill="#c6c6c6"/><rect x="971.40" y="202.400" width="0.700" height="10.400" fill="#c6c6c6"/><rect x="965.0" y="204.13" width="9" height="0.700" fill="#c6c6c6"/><rect x="965.0" y="206.21" width="9" height="0.700" fill="#c6c6c6"/><rect x="965.0" y="208.29" width="9" height="0.700" fill="#c6c6c6"/><rect x="965.0" y="210.37" width="9" height="0.700" fill="#c6c6c6"/><rect x="962" y="204" width="1" height="7" fill="#666"/><text x="100.3" y="211.6" font-size="11.2" fill="#555" text-anchor="middle" >1</text><text x="330.2" y="211.6" font-size="11.2" fill="#555" text-anchor="middle" >1</text><text x="445.4" y="211.6" font-size="11.2" fill="#555" text-anchor="middle" >2</text><text x="560.6" y="211.6" font-size="11.2" fill="#555" text-anchor="middle" >3</text><text x="790.6" y="211.6" font-size="11.2" fill="#555" text-anchor="middle" >5</text><text x="905.6" y="211.6" font-size="11.2" fill="#555" text-anchor="middle" >6</text><text x="1020.6" y="211.6" font-size="11.2" fill="#555" text-anchor="middle" >7</text></svg></div>
<div id="docarea"><div id="page"></div><svg class="ov" width="1200" height="426" viewBox="0 222 1200 426"><rect x="206" y="271" width="1" height="350" fill="#000"/><rect x="348" y="271" width="1" height="350" fill="#000"/><rect x="487" y="271" width="1" height="350" fill="#000"/><rect x="676" y="271" width="1" height="350" fill="#000"/><rect x="852" y="271" width="1" height="350" fill="#000"/><rect x="971" y="271" width="1" height="350" fill="#000"/><rect x="206" y="271" width="766" height="1" fill="#000"/><rect x="206" y="341" width="766" height="1" fill="#000"/><rect x="206" y="410" width="766" height="1" fill="#000"/><rect x="206" y="480" width="766" height="1" fill="#000"/><rect x="206" y="550" width="766" height="1" fill="#000"/><rect x="206" y="620" width="766" height="1" fill="#7a7a7a"/><rect x="188.500" y="253.300" width="17" height="17" fill="#fff" stroke="#ababab"/><g fill="#444" stroke="#444" stroke-width="1.100"><path d="M192 261.800h10M197 256.800v10" fill="none"/><path d="M193.200 259.800l-2.300 2 2.300 2ZM200.800 259.800l2.300 2-2.300 2ZM195 258l2-2.300 2 2.300ZM195 265.600l2 2.300 2-2.300Z" stroke-width="0.500"/></g><rect x="972.500" y="621" width="17" height="17" fill="#fff" stroke="#ababab" stroke-width="1.200"/></svg></div>
<div id="status"><svg class="ov" width="1200" height="26" viewBox="0 648 1200 26"><text x="10.7" y="666" font-size="12" fill="#555" textLength="63.4" lengthAdjust="spacingAndGlyphs" >Page 5 of 7</text><text x="98.1" y="666" font-size="12" fill="#555" textLength="57.4" lengthAdjust="spacingAndGlyphs" >253 words</text><text x="176" y="666" font-size="12" fill="#555" textLength="87.2" lengthAdjust="spacingAndGlyphs" >1325 characters</text><g fill="none" stroke="#505050" stroke-width="1.400"><path d="M294.400 656.400c-1.200-1.600-2.600-1.700-7.200-1.700v13.300h5.200"/><path d="M294.400 656.400c1.200-1.600 2.600-1.700 7.700-1.700v6.400"/><path d="M294.400 656.400v7"/><path d="M293.300 665.600l3.500 3.500 6.300-5.900"/></g><path d="M638.700 664.500h-3.600v-9.900h16.400v7" fill="none" stroke="#505050" stroke-width="1.400"/><path d="M651.0 664.4L648.9 666.0L648.5 668.7L646.0 667.7L643.5 668.7L643.1 666.0L641.0 664.4L643.1 662.8L643.5 660.1L646.0 661.1L648.5 660.1L648.9 662.8Z" fill="#f3f2f1" stroke="#444" stroke-width="1.400" stroke-linejoin="round"/><circle cx="646.0" cy="664.4" r="1.400" fill="#444"/><text x="654.7" y="666" font-size="12" fill="#555" textLength="87.4" lengthAdjust="spacingAndGlyphs" >Display Settings</text><g fill="none" stroke="#444" stroke-width="1.200"><path d="M764 657v-3.500h3.500M776 653.500h3.500v3.500M779.500 665.500v3.500h-3.500M767.500 669h-3.500v-3.500"/><path d="M768 655.500h5l3 3v8.500h-8Z"/><path d="M773 655.500v3h3"/></g><text x="783.2" y="666" font-size="12" fill="#555" textLength="30.9" lengthAdjust="spacingAndGlyphs" >Focus</text><g fill="none" stroke="#505050" stroke-width="1.300"><path d="M852.400 655.600c-2.300-1.800-4.600-2-7.300-1.700v12.300c2.700-0.300 5-0.100 7.300 1.700c2.300-1.800 4.600-2 7.300-1.700v-12.300c-2.700-0.300-5-0.100-7.300 1.700Zv12.300"/><path d="M846.800 657.300h3.700M846.800 659.600h3.700M846.800 661.900h3.700M846.800 664.200h3.700M854.300 657.300h3.700M854.300 659.600h3.700M854.300 661.900h3.700M854.300 664.200h3.700" stroke-width="1.100"/></g><rect x="877.300" y="649" width="47.400" height="25" fill="#cdcbc9"/><g fill="none" stroke="#505050" stroke-width="1.400"><rect x="894.100" y="653.800" width="12.300" height="15.200" fill="#e3e2e1"/><path d="M896.200 656.500h8.200M896.200 658.800h8.200M896.200 661.100h8.200M896.200 663.500h8.200M896.200 665.900h8.200" stroke-width="1.200"/></g><g fill="none" stroke="#505050" stroke-width="1.300"><path d="M947 667.900h-6.200v-14.100h14.800v5.500"/><path d="M940.800 655h14.800" stroke-width="2"/><path d="M943 658.800h8M943 661.300h3.800M943 663.800h3" stroke-width="1.100"/></g><circle cx="951.700" cy="664.200" r="5.200" fill="#4f4f4f"/><path d="M946.500 664.200h10.400M951.700 659v10.400" stroke="#dcdcdc" stroke-width="0.900"/><ellipse cx="951.700" cy="664.200" rx="2.300" ry="5" fill="none" stroke="#dcdcdc" stroke-width="0.900"/><rect x="980" y="661" width="9" height="1.200" fill="#555"/><rect x="995" y="661" width="120" height="1.200" fill="#777"/><rect x="1052" y="655" width="6.200" height="13.300" fill="#777"/><path d="M1120 661.600h9.600M1124.800 656.800v9.600" stroke="#555" stroke-width="1.200" fill="none"/><text x="1146" y="666" font-size="12" fill="#555" textLength="29.2" lengthAdjust="spacingAndGlyphs" >100%</text></svg></div>
<div id="frame"></div>
</div>
</body></html>
